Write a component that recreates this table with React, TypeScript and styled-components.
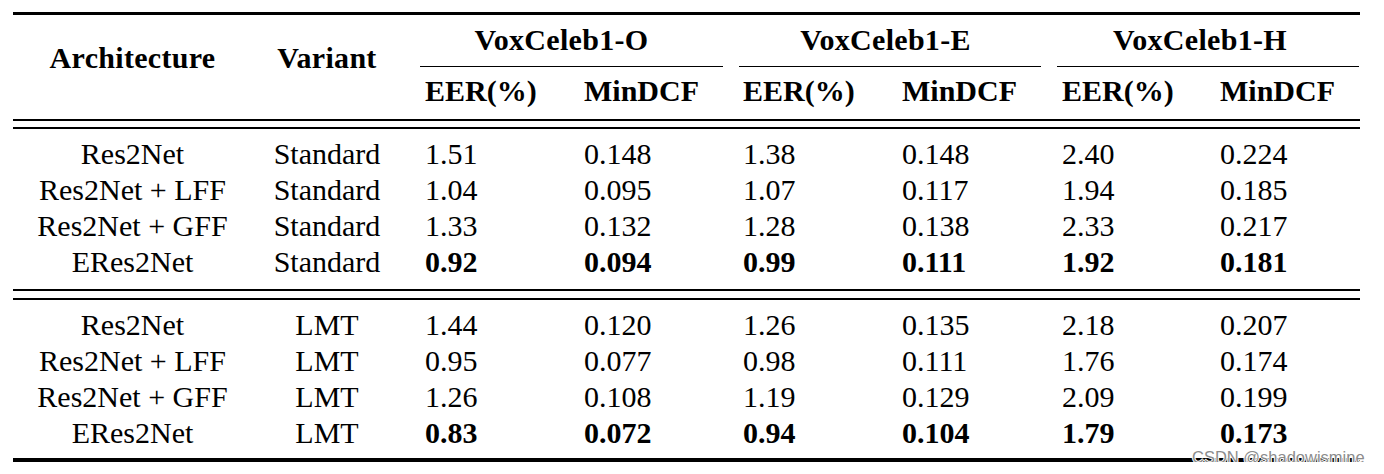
import React from "react";
import styled, { createGlobalStyle } from "styled-components";

const GlobalStyle = createGlobalStyle`
  body {
    margin: 0;
    background: #fff;
    font-family: "Liberation Serif", serif;
    color: #000;
  }
`;

const COLUMNS = "239px 150px 170px 159px 159px 160px 159px 151px";

type Row = {
  arch: string;
  variant: string;
  values: string[];
  best?: boolean;
};

const standardRows: Row[] = [
  { arch: "Res2Net", variant: "Standard", values: ["1.51", "0.148", "1.38", "0.148", "2.40", "0.224"] },
  { arch: "Res2Net + LFF", variant: "Standard", values: ["1.04", "0.095", "1.07", "0.117", "1.94", "0.185"] },
  { arch: "Res2Net + GFF", variant: "Standard", values: ["1.33", "0.132", "1.28", "0.138", "2.33", "0.217"] },
  { arch: "ERes2Net", variant: "Standard", values: ["0.92", "0.094", "0.99", "0.111", "1.92", "0.181"], best: true },
];

const lmtRows: Row[] = [
  { arch: "Res2Net", variant: "LMT", values: ["1.44", "0.120", "1.26", "0.135", "2.18", "0.207"] },
  { arch: "Res2Net + LFF", variant: "LMT", values: ["0.95", "0.077", "0.98", "0.111", "1.76", "0.174"] },
  { arch: "Res2Net + GFF", variant: "LMT", values: ["1.26", "0.108", "1.19", "0.129", "2.09", "0.199"] },
  { arch: "ERes2Net", variant: "LMT", values: ["0.83", "0.072", "0.94", "0.104", "1.79", "0.173"], best: true },
];

const groups = [
  { name: "VoxCeleb1-O", ruleLeft: 18, ruleRight: 8 },
  { name: "VoxCeleb1-E", ruleLeft: 8, ruleRight: 9 },
  { name: "VoxCeleb1-H", ruleLeft: 7, ruleRight: 1 },
];

const Page = styled.div`
  position: relative;
  width: 1384px;
  padding: 12px 0 0 13px;
  box-sizing: border-box;
`;

const Table = styled.div`
  width: 1347px;
  border-top: 3px solid #000;
  border-bottom: 4px solid #000;
`;

const Header = styled.div`
  display: grid;
  grid-template-columns: ${COLUMNS};
  padding: 7px 0 10px;
`;

const HeadText = styled.div`
  font-family: "Liberation Serif", serif;
  font-size: 30px;
  font-weight: 700;
  line-height: 36px;
`;

const HeadLabel = styled(HeadText)`
  grid-row: 1 / 3;
  text-align: center;
  padding-top: 18px;
  letter-spacing: 0.3px;
`;

const Group = styled.div`
  grid-column: span 2;
  display: flex;
  flex-direction: column;
`;

const GroupTitle = styled(HeadText)`
  text-align: center;
  padding-right: 10px;
  letter-spacing: 0.3px;
`;

const CmidRule = styled.div<{ $left: number; $right: number }>`
  margin: 8px ${({ $right }) => $right}px 0 ${({ $left }) => $left}px;
  border-top: 1px solid #000;
`;

const SubHead = styled(HeadText)<{ $pad: number }>`
  padding: 6px 0 0 ${({ $pad }) => $pad}px;
`;

const DoubleRule = styled.div<{ $gap: number }>`
  height: ${({ $gap }) => $gap}px;
  border-top: 2px solid #000;
  border-bottom: 2px solid #000;
`;

const Body = styled.div<{ $bottom: number }>`
  display: grid;
  grid-template-columns: ${COLUMNS};
  padding: 7px 0 ${({ $bottom }) => $bottom}px;
`;

const Cell = styled.div<{ $bold?: boolean; $pad?: number; $center?: boolean }>`
  font-family: "Liberation Serif", serif;
  font-size: 30px;
  line-height: 36px;
  font-weight: ${({ $bold }) => ($bold ? 700 : 400)};
  text-align: ${({ $center }) => ($center ? "center" : "left")};
  padding-left: ${({ $pad }) => $pad ?? 0}px;
`;

const Watermark = styled.div`
  position: absolute;
  left: 1192px;
  top: 448px;
  font-family: "Liberation Sans", Arial, sans-serif;
  font-size: 16.5px;
  line-height: 18px;
  color: #8c8c8c;
  white-space: nowrap;
  text-shadow: 1px 0 0 #fff, -1px 0 0 #fff, 0 1px 0 #fff, 0 -1px 0 #fff;
`;

// left padding of each numeric column so text starts where the figure puts it
const valuePads = [23, 12, 12, 12, 12, 11];

function RowGroup({ rows, bottom }: { rows: Row[]; bottom: number }) {
  return (
    <Body $bottom={bottom}>
      {rows.map((row) => (
        <React.Fragment key={row.arch + row.variant}>
          <Cell $center>{row.arch}</Cell>
          <Cell $center>{row.variant}</Cell>
          {row.values.map((v, i) => (
            <Cell key={i} $pad={valuePads[i]} $bold={row.best}>
              {v}
            </Cell>
          ))}
        </React.Fragment>
      ))}
    </Body>
  );
}

export default function App() {
  return (
    <Page>
      <GlobalStyle />
      <Table>
        <Header>
          <HeadLabel>Architecture</HeadLabel>
          <HeadLabel>Variant</HeadLabel>
          {groups.map((g) => (
            <Group key={g.name}>
              <GroupTitle>{g.name}</GroupTitle>
              <CmidRule $left={g.ruleLeft} $right={g.ruleRight} />
            </Group>
          ))}
          {groups.map((g, gi) => (
            <React.Fragment key={g.name + "-sub"}>
              <SubHead $pad={valuePads[gi * 2]}>EER(%)</SubHead>
              <SubHead $pad={valuePads[gi * 2 + 1]}>MinDCF</SubHead>
            </React.Fragment>
          ))}
        </Header>
        <DoubleRule $gap={6} />
        <RowGroup rows={standardRows} bottom={9} />
        <DoubleRule $gap={7} />
        <RowGroup rows={lmtRows} bottom={7} />
      </Table>
      <Watermark>CSDN @shadowismine</Watermark>
    </Page>
  );
}
